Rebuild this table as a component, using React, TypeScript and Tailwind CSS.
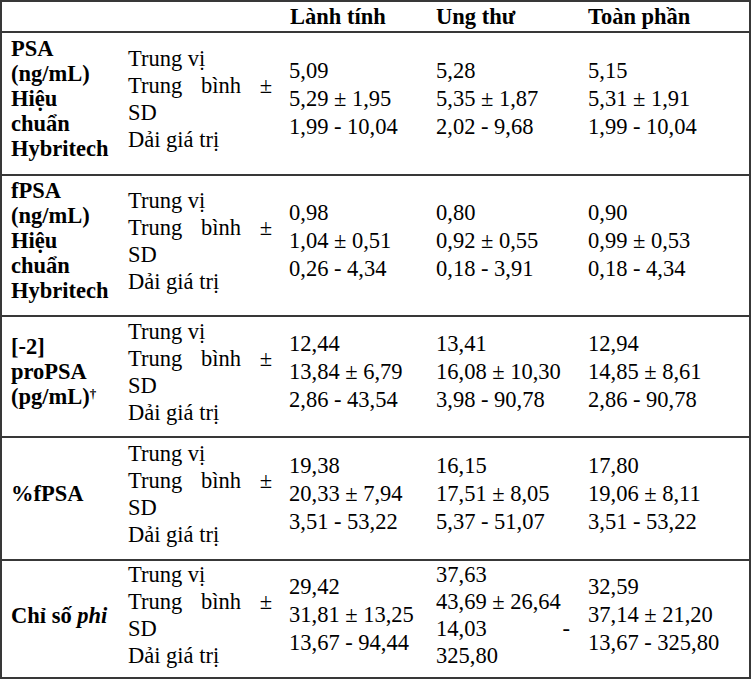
import React from "react";

type Row = {
  h: string;
  label: React.ReactNode;
  cols: (string | React.ReactNode)[][];
};

const rows: Row[] = [
  {
    h: "h-[143px]",
    label: (
      <>
        <div>PSA</div>
        <div>(ng/mL)</div>
        <div>Hiệu</div>
        <div>chuẩn</div>
        <div>Hybritech</div>
      </>
    ),
    cols: [
      ["5,09", "5,29 ± 1,95", "1,99 - 10,04"],
      ["5,28", "5,35 ± 1,87", "2,02 - 9,68"],
      ["5,15", "5,31 ± 1,91", "1,99 - 10,04"],
    ],
  },
  {
    h: "h-[141px]",
    label: (
      <>
        <div>fPSA</div>
        <div>(ng/mL)</div>
        <div>Hiệu</div>
        <div>chuẩn</div>
        <div>Hybritech</div>
      </>
    ),
    cols: [
      ["0,98", "1,04 ± 0,51", "0,26 - 4,34"],
      ["0,80", "0,92 ± 0,55", "0,18 - 3,91"],
      ["0,90", "0,99 ± 0,53", "0,18 - 4,34"],
    ],
  },
  {
    h: "h-[121px]",
    label: (
      <>
        <div>[-2]</div>
        <div>proPSA</div>
        <div>
          (pg/mL)<sup className="text-[13px]">†</sup>
        </div>
      </>
    ),
    cols: [
      ["12,44", "13,84 ± 6,79", "2,86 - 43,54"],
      ["13,41", "16,08 ± 10,30", "3,98 - 90,78"],
      ["12,94", "14,85 ± 8,61", "2,86 - 90,78"],
    ],
  },
  {
    h: "h-[123px]",
    label: <div>%fPSA</div>,
    cols: [
      ["19,38", "20,33 ± 7,94", "3,51 - 53,22"],
      ["16,15", "17,51 ± 8,05", "5,37 - 51,07"],
      ["17,80", "19,06 ± 8,11", "3,51 - 53,22"],
    ],
  },
  {
    h: "h-[116px]",
    label: (
      <div>
        Chỉ số <i>phi</i>
      </div>
    ),
    cols: [
      ["29,42", "31,81 ± 13,25", "13,67 - 94,44"],
      [
        "37,63",
        "43,69 ± 26,64",
        <div key="s" className="flex w-[134px] justify-between">
          <span>14,03</span>
          <span>-</span>
        </div>,
        "325,80",
      ],
      ["32,59", "37,14 ± 21,20", "13,67 - 325,80"],
    ],
  },
];

function SubLabels() {
  return (
    <div className="w-[144px] leading-[27px]">
      <div>Trung vị</div>
      <div className="text-justify">Trung bình ± SD</div>
      <div>Dải giá trị</div>
    </div>
  );
}

export default function App() {
  return (
    <div className="min-h-[682px] w-[755px] bg-white font-['Liberation_Serif','Times_New_Roman',serif] text-black">
      <div className="w-[751px] border-2 border-[#383838] text-[22.5px]">
        <div className="grid h-[31px] grid-cols-[116px_170px_148px_152px_1fr] border-b-2 border-[#383838] font-bold leading-[27px]">
          <div />
          <div />
          <div className="flex items-center pl-[2px]">Lành tính</div>
          <div className="flex items-center">Ung thư</div>
          <div className="flex items-center">Toàn phần</div>
        </div>
        {rows.map((r, i) => (
          <div
            key={i}
            className={`grid grid-cols-[116px_170px_148px_152px_1fr] ${r.h} ${
              i < rows.length - 1 ? "border-b-2 border-[#383838]" : ""
            }`}
          >
            <div className="flex items-center pb-[10px] pl-[9px] font-bold leading-[25px]">
              <div>{r.label}</div>
            </div>
            <div className="flex items-center pb-[10px] pl-[10px]">
              <SubLabels />
            </div>
            {r.cols.map((c, j) => (
              <div
                key={j}
                className={`flex items-center pb-[10px] ${j === 0 ? "pl-[1px]" : ""}`}
              >
                <div className={c.length > 3 ? "leading-[27px]" : "leading-[28px]"}>
                  {c.map((v, k) =>
                    typeof v === "string" ? <div key={k}>{v}</div> : v
                  )}
                </div>
              </div>
            ))}
          </div>
        ))}
      </div>
    </div>
  );
}
